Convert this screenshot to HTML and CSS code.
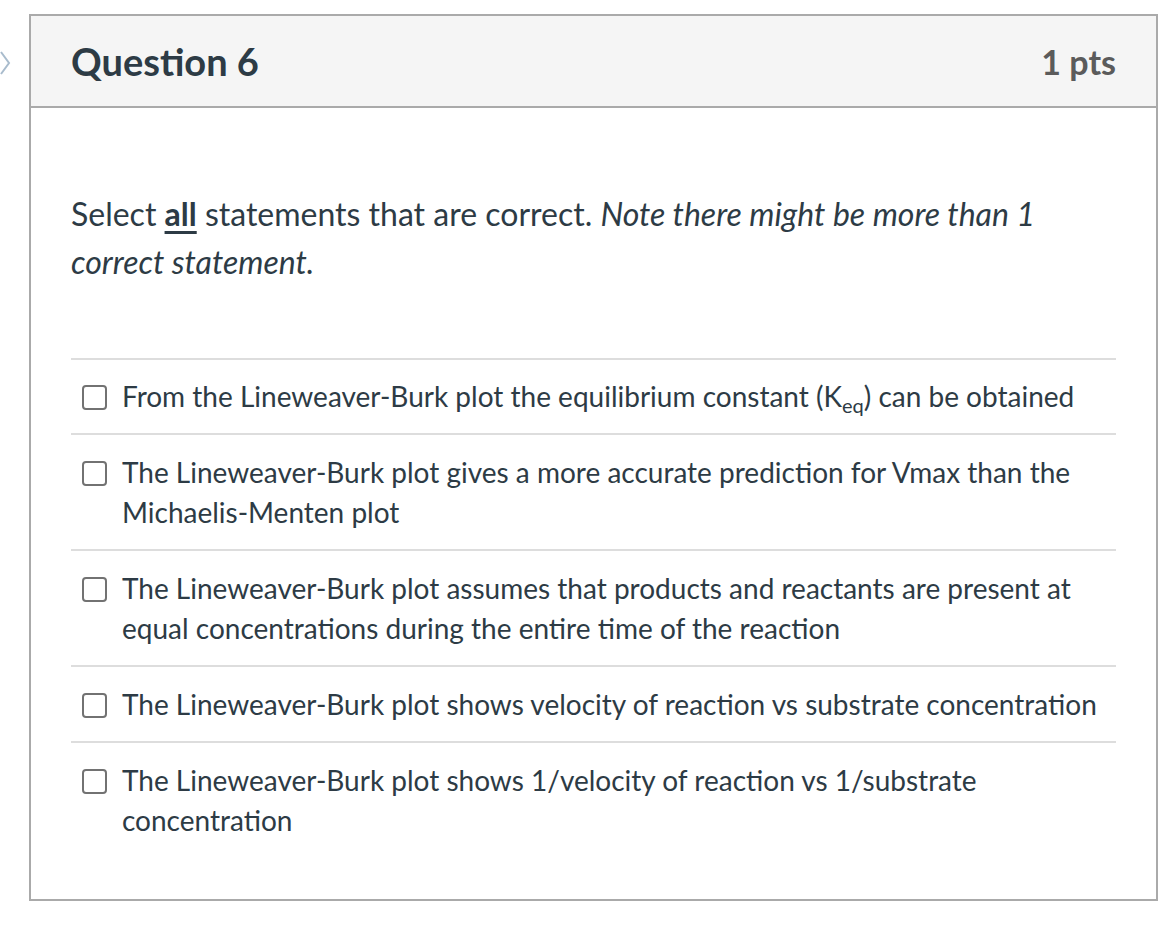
FILE: index.html
```html
<!DOCTYPE html>
<html>
<head>
<meta charset="utf-8">
<link rel="stylesheet" href="styles.css">
</head>
<body>
<div class="page">
  <div class="chevron">
    <svg width="12" height="26" viewBox="0 0 12 26"><polyline points="1,2 9,13 1,24" fill="none" stroke="#a9bccd" stroke-width="2"/></svg>
  </div>
  <div class="question">
    <div class="qheader">
      <h2 class="qtitle">Question 6</h2>
      <span class="qpts">1 pts</span>
    </div>
    <div class="qbody">
      <p class="qtext">Select <strong class="ul">all</strong> statements that are correct. <em>Note there might be more than 1 correct statement.</em></p>
      <div class="answers">
        <label class="answer"><span class="box"></span><span class="atext">From the Lineweaver-Burk plot the equilibrium constant (K<sub>eq</sub>) can be obtained</span></label>
        <label class="answer"><span class="box"></span><span class="atext">The Lineweaver-Burk plot gives a more accurate prediction for Vmax than the Michaelis-Menten plot</span></label>
        <label class="answer"><span class="box"></span><span class="atext">The Lineweaver-Burk plot assumes that products and reactants are present at equal concentrations during the entire time of the reaction</span></label>
        <label class="answer"><span class="box"></span><span class="atext">The Lineweaver-Burk plot shows velocity of reaction vs substrate concentration</span></label>
        <label class="answer"><span class="box"></span><span class="atext">The Lineweaver-Burk plot shows 1/velocity of reaction vs 1/substrate concentration</span></label>
      </div>
    </div>
  </div>
</div>
</body>
</html>
```

FILE: styles.css
```css
html, body {
  margin: 0;
  padding: 0;
  background: #ffffff;
}
body {
  font-family: Lato, "Liberation Sans", sans-serif;
  color: #2d3b45;
}
.page {
  display: flex;
  align-items: flex-start;
  padding-top: 14px;
}
.chevron {
  width: 29px;
  padding-top: 36px;
  display: flex;
}
.question {
  width: 1125px;
  border: 2px solid #aaaaaa;
}
.qheader {
  background: #f5f5f5;
  border-bottom: 2px solid #aaaaaa;
  display: flex;
  justify-content: space-between;
  align-items: center;
  height: 90px;
  padding: 0 40px;
}
.qtitle {
  margin: 0;
  font-size: 38px;
  font-weight: 700;
  color: #2d3b45;
}
.qpts {
  font-size: 34px;
  font-weight: 700;
  color: #5b5b5b;
}
.qbody {
  padding: 82px 40px 42px 40px;
}
.qtext {
  margin: 0 0 72px 0;
  font-size: 32px;
  line-height: 48px;
}
.ul {
  text-decoration: underline;
  text-decoration-thickness: 3px;
  text-underline-offset: 5px;
}
.answers {
  border-top: 2px solid #dddddd;
}
.answer {
  display: flex;
  align-items: flex-start;
  border-bottom: 2px solid #dddddd;
  padding: 17px 0 17px 11px;
  font-size: 28px;
  line-height: 40px;
}
.answer:first-child {
  padding-top: 16px;
}
.answer:last-child {
  border-bottom: none;
}
.box {
  flex: none;
  box-sizing: border-box;
  width: 25px;
  height: 25px;
  border: 2px solid #727272;
  border-radius: 4px;
  margin-top: 9px;
  margin-right: 15px;
}
.atext sub {
  font-size: 20px;
  line-height: 0;
  vertical-align: -6px;
}
```
